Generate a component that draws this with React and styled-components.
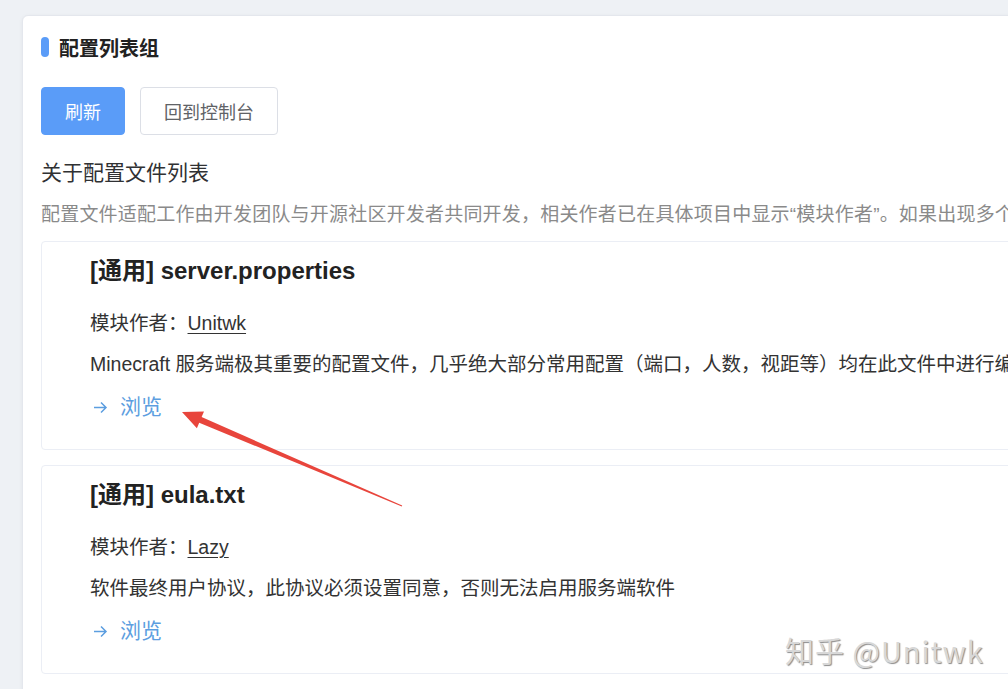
import styled, { createGlobalStyle } from "styled-components";

const Global = createGlobalStyle`
  html, body {
    margin: 0;
    padding: 0;
    background: #eef1f5;
    overflow: hidden;
  }
  body {
    font-family: "Liberation Sans", "Noto Sans CJK SC", sans-serif;
    color: #303133;
  }
`;

const Page = styled.div`
  position: relative;
  width: 1008px;
  height: 689px;
  padding: 15px 0 0 22px;
  box-sizing: border-box;
  overflow: hidden;
`;

const Panel = styled.div`
  width: 1040px;
  min-height: 700px;
  background: #ffffff;
  border-radius: 6px;
  border: 1px solid #e4e7ed;
  box-shadow: 0 1px 4px rgba(0, 0, 0, 0.05);
  padding: 18px 0 0 18px;
  box-sizing: border-box;
`;

const Heading = styled.div`
  display: flex;
  align-items: center;
  gap: 10px;
  height: 26px;
  font-size: 20px;
  font-weight: 700;
  color: #222;
`;

const Pill = styled.span`
  width: 8px;
  height: 20px;
  border-radius: 4px;
  background: #5a9cf8;
`;

const Toolbar = styled.div`
  display: flex;
  gap: 15px;
  margin-top: 27px;
`;

const Button = styled.button`
  height: 48px;
  padding: 0 23px;
  font-family: inherit;
  font-size: 18px;
  border-radius: 4px;
  border: 1px solid ${({ primary }) => (primary ? "#5a9cf8" : "#dcdfe6")};
  background: ${({ primary }) => (primary ? "#5a9cf8" : "#ffffff")};
  color: ${({ primary }) => (primary ? "#ffffff" : "#606266")};
`;

const SubTitle = styled.div`
  margin-top: 24px;
  font-size: 21px;
  line-height: 28px;
  color: #303133;
`;

const Note = styled.div`
  margin-top: 15px;
  font-size: 19px;
  line-height: 26px;
  letter-spacing: 0.2px;
  color: #8a8a8a;
  white-space: nowrap;
`;

const List = styled.div`
  display: flex;
  flex-direction: column;
  gap: 15px;
  margin-top: 13px;
`;

const Item = styled.div`
  height: 209px;
  border: 1px solid #ebeef5;
  border-radius: 4px;
  padding: 14px 0 0 48px;
  box-sizing: border-box;
  white-space: nowrap;
`;

const ItemTitle = styled.div`
  font-size: 24px;
  line-height: 30px;
  font-weight: 700;
  color: #222;
`;

const Line = styled.div`
  margin-top: ${({ gap }) => gap}px;
  font-size: 19.5px;
  line-height: 28px;
  color: #333;
`;

const Author = styled.span`
  text-decoration: underline;
  text-underline-offset: 3px;
`;

const Browse = styled.div`
  margin-top: 14px;
  padding-left: 3px;
  font-size: 21px;
  line-height: 30px;
  color: #5c9ee0;
  display: flex;
  align-items: center;
  gap: 12px;
`;

const Watermark = styled.div`
  position: absolute;
  left: 785px;
  top: 629px;
  font-size: 29px;
  letter-spacing: 1px;
  color: #d8d8d8;
  text-shadow: 1px 1px 1px #8c8c8c;
  font-family: "Noto Sans CJK SC", sans-serif;
`;

const Overlay = styled.svg`
  position: absolute;
  left: 0;
  top: 0;
  pointer-events: none;
`;

const items = [
  {
    title: "[通用] server.properties",
    author: "Unitwk",
    desc: "Minecraft 服务端极其重要的配置文件，几乎绝大部分常用配置（端口，人数，视距等）均在此文件中进行编辑",
  },
  {
    title: "[通用] eula.txt",
    author: "Lazy",
    desc: "软件最终用户协议，此协议必须设置同意，否则无法启用服务端软件",
  },
];

export default function App() {
  return (
    <>
      <Global />
      <Page>
        <Panel>
          <Heading>
            <Pill />
            配置列表组
          </Heading>
          <Toolbar>
            <Button primary>刷新</Button>
            <Button>回到控制台</Button>
          </Toolbar>
          <SubTitle>关于配置文件列表</SubTitle>
          <Note>
            配置文件适配工作由开发团队与开源社区开发者共同开发，相关作者已在具体项目中显示“模块作者”。如果出现多个相同配置文件
          </Note>
          <List>
            {items.map((it) => (
              <Item key={it.title}>
                <ItemTitle>{it.title}</ItemTitle>
                <Line gap={23}>
                  模块作者：<Author>{it.author}</Author>
                </Line>
                <Line gap={13}>{it.desc}</Line>
                <Browse>
                  <svg width="15" height="15" viewBox="0 0 15 15" fill="none" stroke="#5c9ee0" strokeWidth="1.5">
                    <path d="M1 7.5h12M8 2.5l5 5-5 5" />
                  </svg>
                  浏览
                </Browse>
              </Item>
            ))}
          </List>
        </Panel>
        <Overlay width="1008" height="689">
          <polygon
            points="182,412 204,411.6 201.6,417.1 402.2,505.5 401.8,506.5 199.2,422.7 196.9,428.2"
            fill="#e8453c"
          />
        </Overlay>
        <Watermark>知乎 @Unitwk</Watermark>
      </Page>
    </>
  );
}
